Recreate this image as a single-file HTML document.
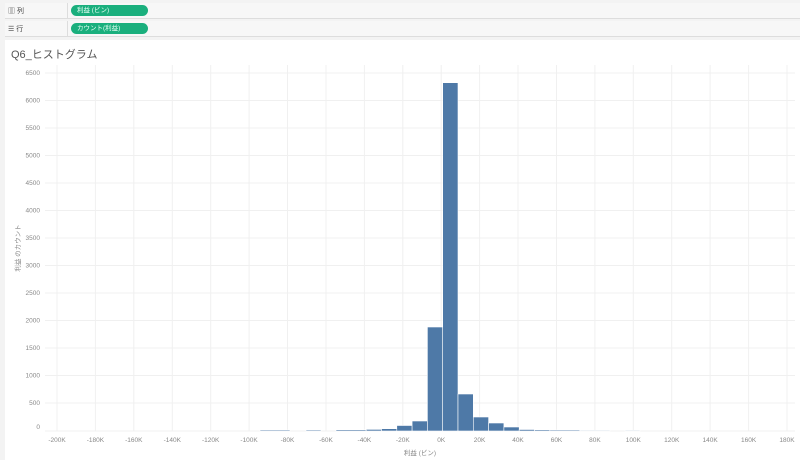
<!DOCTYPE html>
<html><head><meta charset="utf-8"><style>
body{margin:0;width:800px;height:460px;background:#f3f3f3;font-family:"Liberation Sans","Noto Sans CJK JP",sans-serif;overflow:hidden;position:relative}
.shelf{position:absolute;left:5px;right:0;height:15px;background:#f7f7f7;border-bottom:1px solid #ddd}
.lab{position:absolute;left:3px;top:3px;font-size:7px;color:#444}
.pill{position:absolute;left:66px;top:2px;width:77px;height:11px;border-radius:6px;background:#1aaf7d;color:#e8fff5;font-size:6.5px;line-height:11px;padding-left:6px;box-sizing:border-box}
.sep{position:absolute;left:62px;top:0;bottom:0;border-left:1px solid #ddd}
.panel{position:absolute;left:5px;top:40px;right:0;bottom:0;background:#fff}
</style></head><body>
<div class="shelf" style="top:3px"><span class="lab">▥ 列</span><div class="sep"></div><div class="pill">利益 (ビン)</div></div>
<div class="shelf" style="top:21px"><span class="lab">☰ 行</span><div class="sep"></div><div class="pill">カウント(利益)</div></div>
<div class="panel"></div>
<div style="position:absolute;left:11px;top:46px;font-size:11px;color:#555">Q6_ヒストグラム</div>
<svg width="800" height="460" style="position:absolute;left:0;top:0" font-family="Liberation Sans" font-size="6.5" fill="#888">
<g stroke="#f0f0f0" stroke-width="1">
<line x1="45" x2="795" y1="73" y2="73"/><line x1="45" x2="795" y1="100.5" y2="100.5"/><line x1="45" x2="795" y1="128" y2="128"/><line x1="45" x2="795" y1="155.5" y2="155.5"/><line x1="45" x2="795" y1="183" y2="183"/><line x1="45" x2="795" y1="210.5" y2="210.5"/><line x1="45" x2="795" y1="238" y2="238"/><line x1="45" x2="795" y1="265.5" y2="265.5"/><line x1="45" x2="795" y1="293" y2="293"/><line x1="45" x2="795" y1="320.5" y2="320.5"/><line x1="45" x2="795" y1="348" y2="348"/><line x1="45" x2="795" y1="375.5" y2="375.5"/><line x1="45" x2="795" y1="403" y2="403"/><line x1="45" x2="795" y1="431" y2="431"/>
<line x1="57" x2="57" y1="65" y2="431"/><line x1="95.4" x2="95.4" y1="65" y2="431"/><line x1="133.8" x2="133.8" y1="65" y2="431"/><line x1="172.3" x2="172.3" y1="65" y2="431"/><line x1="210.7" x2="210.7" y1="65" y2="431"/><line x1="249.1" x2="249.1" y1="65" y2="431"/><line x1="287.5" x2="287.5" y1="65" y2="431"/><line x1="326" x2="326" y1="65" y2="431"/><line x1="364.4" x2="364.4" y1="65" y2="431"/><line x1="402.8" x2="402.8" y1="65" y2="431"/><line x1="441.2" x2="441.2" y1="65" y2="431"/><line x1="479.6" x2="479.6" y1="65" y2="431"/><line x1="518" x2="518" y1="65" y2="431"/><line x1="556.5" x2="556.5" y1="65" y2="431"/><line x1="594.9" x2="594.9" y1="65" y2="431"/><line x1="633.3" x2="633.3" y1="65" y2="431"/><line x1="671.7" x2="671.7" y1="65" y2="431"/><line x1="710.1" x2="710.1" y1="65" y2="431"/><line x1="748.6" x2="748.6" y1="65" y2="431"/><line x1="787" x2="787" y1="65" y2="431"/>
</g>
<g fill="#4e79a7" stroke="#fff" stroke-width="0.6">
<rect x="260" y="430" width="30" height="1"/><rect x="306" y="430" width="15" height="1"/>
<rect x="336" y="429.8" width="30" height="1.2"/><rect x="366.2" y="429.4" width="15.3" height="1.6"/>
<rect x="381.5" y="428.7" width="15.3" height="2.3"/><rect x="396.8" y="425.5" width="15.3" height="5.5"/>
<rect x="412.1" y="421" width="15.3" height="10"/><rect x="427.4" y="327" width="15.3" height="104"/>
<rect x="442.7" y="82.7" width="15.3" height="348.3"/><rect x="458" y="394" width="15.3" height="37"/>
<rect x="473.3" y="417" width="15.3" height="14"/><rect x="488.6" y="423" width="15.3" height="8"/>
<rect x="503.9" y="427" width="15.3" height="4"/><rect x="519.2" y="429.5" width="15.3" height="1.5"/>
<rect x="534.5" y="429.8" width="15.3" height="1.2"/><rect x="549.8" y="430" width="30" height="1"/>
<rect x="580" y="430.3" width="30" height="0.7"/><rect x="625" y="430.3" width="15" height="0.7"/>
</g>
<g text-anchor="end">
<text x="40" y="75">6500</text><text x="40" y="102.5">6000</text><text x="40" y="130">5500</text><text x="40" y="157.5">5000</text><text x="40" y="185">4500</text><text x="40" y="212.5">4000</text><text x="40" y="240">3500</text><text x="40" y="267.5">3000</text><text x="40" y="295">2500</text><text x="40" y="322.5">2000</text><text x="40" y="350">1500</text><text x="40" y="377.5">1000</text><text x="40" y="405">500</text><text x="40" y="429">0</text>
</g>
<g text-anchor="middle">
<text x="57" y="442">-200K</text><text x="95.4" y="442">-180K</text><text x="133.8" y="442">-160K</text><text x="172.3" y="442">-140K</text><text x="210.7" y="442">-120K</text><text x="249.1" y="442">-100K</text><text x="287.5" y="442">-80K</text><text x="326" y="442">-60K</text><text x="364.4" y="442">-40K</text><text x="402.8" y="442">-20K</text><text x="441.2" y="442">0K</text><text x="479.6" y="442">20K</text><text x="518" y="442">40K</text><text x="556.5" y="442">60K</text><text x="594.9" y="442">80K</text><text x="633.3" y="442">100K</text><text x="671.7" y="442">120K</text><text x="710.1" y="442">140K</text><text x="748.6" y="442">160K</text><text x="787" y="442">180K</text>
<text x="420" y="455" font-family="Liberation Sans, Noto Sans CJK JP">利益 (ビン)</text>
<text transform="translate(20,248) rotate(-90)" font-family="Liberation Sans, Noto Sans CJK JP">利益 のカウント</text>
</g>
</svg>
</body></html>
